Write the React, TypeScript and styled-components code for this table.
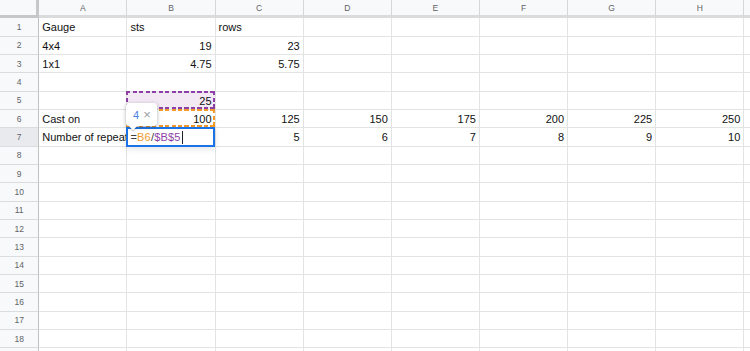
import { Fragment } from 'react';
import styled, { createGlobalStyle, css } from 'styled-components';

const COL_W = 88.125;
const ROW_H = 18.333;
const HEAD_W = 39.3;

const columns = ['A', 'B', 'C', 'D', 'E', 'F', 'G', 'H', 'I'];
const rowCount = 19;

type Mark = 'purple' | 'orange' | 'edit';
type CellData = { text?: string; num?: boolean; mark?: Mark };

const sheet: Record<string, CellData> = {
  A1: { text: 'Gauge' },
  B1: { text: 'sts' },
  C1: { text: 'rows' },
  A2: { text: '4x4' },
  B2: { text: '19', num: true },
  C2: { text: '23', num: true },
  A3: { text: '1x1' },
  B3: { text: '4.75', num: true },
  C3: { text: '5.75', num: true },
  B5: { text: '25', num: true, mark: 'purple' },
  A6: { text: 'Cast on' },
  B6: { text: '100', num: true, mark: 'orange' },
  C6: { text: '125', num: true },
  D6: { text: '150', num: true },
  E6: { text: '175', num: true },
  F6: { text: '200', num: true },
  G6: { text: '225', num: true },
  H6: { text: '250', num: true },
  A7: { text: 'Number of repeats' },
  B7: { mark: 'edit' },
  C7: { text: '5', num: true },
  D7: { text: '6', num: true },
  E7: { text: '7', num: true },
  F7: { text: '8', num: true },
  G7: { text: '9', num: true },
  H7: { text: '10', num: true },
};

const ACTIVE_ROW = 7;

const GlobalStyle = createGlobalStyle`
  html, body {
    margin: 0;
    padding: 0;
    background: #fff;
  }
  body {
    font-family: "Liberation Sans", Arial, sans-serif;
    overflow: hidden;
  }
`;

const Wrapper = styled.div`
  width: 750px;
  height: 351px;
  overflow: hidden;
  background: #fff;
`;

const Grid = styled.div`
  display: grid;
  grid-template-columns: ${HEAD_W}px repeat(${columns.length}, ${COL_W}px);
  grid-auto-rows: ${ROW_H}px;
`;

const Corner = styled.div`
  box-sizing: border-box;
  background: #f8f9fa;
  border-right: 3px solid #c7c7c7;
  border-bottom: 3px solid #c7c7c7;
`;

const ColHead = styled.div`
  box-sizing: border-box;
  display: flex;
  align-items: center;
  justify-content: center;
  background: #f8f9fa;
  border-right: 1px solid #d4d6d8;
  border-bottom: 3px solid #d9dbdc;
  color: #5f6368;
  font-size: 8.5px;
  padding-top: 1px;
`;

const RowHead = styled.div<{ $active?: boolean }>`
  box-sizing: border-box;
  display: flex;
  align-items: center;
  justify-content: center;
  background: ${(p) => (p.$active ? '#e8eaed' : '#f8f9fa')};
  border-right: 1px solid #c0c0c0;
  border-bottom: 1px solid #dadcdd;
  color: #5f6368;
  font-size: 8.5px;
`;

const dashed = (c: string) => css`
  background:
    repeating-linear-gradient(90deg, ${c} 0 4px, transparent 4px 6.5px) top left / 100% 2px no-repeat,
    repeating-linear-gradient(90deg, ${c} 0 4px, transparent 4px 6.5px) bottom left / 100% 2px no-repeat,
    repeating-linear-gradient(180deg, ${c} 0 4px, transparent 4px 6.5px) top left / 2px 100% no-repeat,
    repeating-linear-gradient(180deg, ${c} 0 4px, transparent 4px 6.5px) top right / 2px 100% no-repeat;
`;

const Cell = styled.div<{ $num?: boolean; $mark?: Mark }>`
  position: relative;
  box-sizing: border-box;
  display: flex;
  align-items: center;
  justify-content: ${(p) => (p.$num ? 'flex-end' : 'flex-start')};
  padding: 1px 3px 0 3px;
  border-right: 1px solid #e2e3e3;
  border-bottom: 1px solid #e2e3e3;
  font-size: 11px;
  color: #111;
  white-space: nowrap;
  overflow: ${(p) => (p.$mark ? 'visible' : 'hidden')};
  background: ${(p) => (p.$mark === 'purple' ? '#f3e9f5' : '#fff')};
  z-index: ${(p) => (p.$mark === 'edit' ? 3 : p.$mark ? 2 : 'auto')};

  ${(p) =>
    (p.$mark === 'purple' || p.$mark === 'orange') &&
    css`
      &::after {
        content: '';
        position: absolute;
        inset: -1px 0 0 -1px;
        ${dashed(p.$mark === 'purple' ? '#8e3fa6' : '#f39a2b')}
      }
    `}
`;

const Editor = styled.div`
  position: absolute;
  inset: -1px 0 -1px -1px;
  box-sizing: border-box;
  border: 2px solid #1a73e8;
  background: #fff;
  display: flex;
  align-items: center;
  padding: 1px 0 0 2px;
  font-size: 11px;
  letter-spacing: 0.2px;
  color: #3c4043;
  box-shadow: 0 2px 6px rgba(60, 64, 67, 0.15);
`;

const Ref = styled.span<{ $color: string }>`
  color: ${(p) => p.$color};
`;

const Caret = styled.span`
  display: inline-block;
  width: 1px;
  height: 13px;
  margin-left: 1px;
  background: #202124;
`;

const Hint = styled.div`
  position: absolute;
  left: -1px;
  bottom: calc(100% + 2px);
  width: 31px;
  height: 23px;
  box-sizing: border-box;
  display: flex;
  align-items: center;
  justify-content: center;
  gap: 4px;
  background: #fff;
  border-radius: 3px;
  box-shadow: 0 1px 3px rgba(60, 64, 67, 0.35), 0 1px 6px rgba(60, 64, 67, 0.12);
  font-size: 11px;
  z-index: 4;

  &::after {
    content: '';
    position: absolute;
    left: 4px;
    bottom: -3px;
    width: 6px;
    height: 6px;
    background: #fff;
    transform: rotate(45deg);
    box-shadow: 1px 1px 1px rgba(60, 64, 67, 0.2);
  }
`;

const HintNum = styled.span`
  color: #4a80e8;
`;

const HintClose = styled.span`
  color: #9aa0a6;
  font-size: 13px;
  line-height: 1;
`;

function FormulaEditor() {
  return (
    <>
      <Hint>
        <HintNum>4</HintNum>
        <HintClose>×</HintClose>
      </Hint>
      <Editor>
        =<Ref $color="#f39a2b">B6</Ref>/<Ref $color="#8e3fa6">$B$5</Ref>
        <Caret />
      </Editor>
    </>
  );
}

export default function App() {
  const rows = Array.from({ length: rowCount }, (_, i) => i + 1);
  return (
    <Wrapper>
      <GlobalStyle />
      <Grid>
        <Corner />
        {columns.map((c) => (
          <ColHead key={c}>{c === 'I' ? '' : c}</ColHead>
        ))}
        {rows.map((r) => (
          <Fragment key={r}>
            <RowHead $active={r === ACTIVE_ROW}>{r < 19 ? r : ''}</RowHead>
            {columns.map((c) => {
              const d = sheet[`${c}${r}`] ?? {};
              return (
                <Cell key={`${c}${r}`} $num={d.num} $mark={d.mark}>
                  {d.mark === 'edit' ? <FormulaEditor /> : d.text}
                </Cell>
              );
            })}
          </Fragment>
        ))}
      </Grid>
    </Wrapper>
  );
}
